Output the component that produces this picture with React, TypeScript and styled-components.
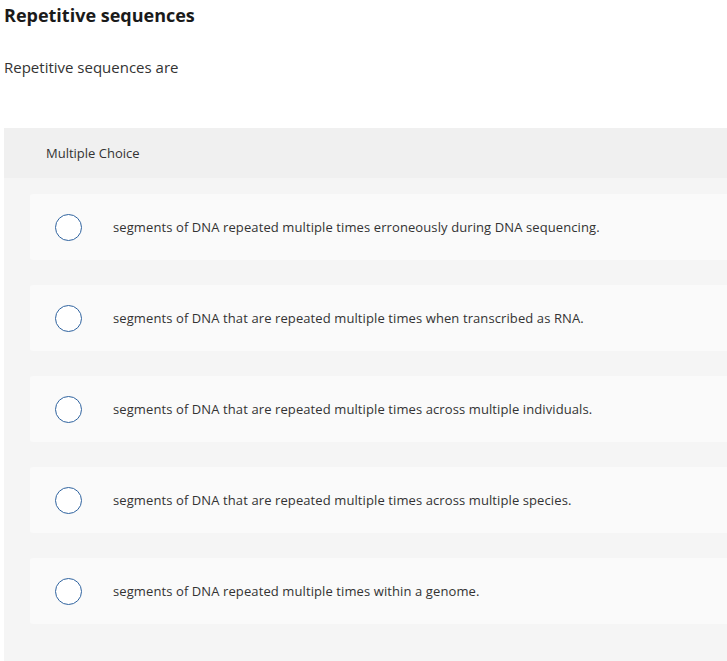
import React from "react";
import styled, { createGlobalStyle } from "styled-components";

const Global = createGlobalStyle`
  html, body { margin: 0; padding: 0; background: #ffffff; }
  body { font-family: "Open Sans", "Liberation Sans", Arial, sans-serif; color: #333; }
  * { box-sizing: border-box; }
`;

const Page = styled.div`
  width: 727px;
  height: 661px;
  overflow: hidden;
  padding-left: 4px;
`;

const Title = styled.h1`
  margin: 0;
  padding-top: 4px;
  font-size: 18px;
  line-height: 22px;
  font-weight: 700;
  color: #1a1a1a;
`;

const Prompt = styled.p`
  margin: 31px 0 0;
  font-size: 15px;
  line-height: 20px;
  color: #333;
`;

const Panel = styled.section`
  margin-top: 51px;
  width: 740px;
  background: #f5f5f5;
  padding-bottom: 37px;
`;

const Header = styled.div`
  height: 50px;
  background: #f0f0f0;
  display: flex;
  align-items: center;
  padding-left: 42px;
  font-size: 13px;
  color: #333;
`;

const Options = styled.div`
  display: flex;
  flex-direction: column;
  gap: 25px;
  padding: 16px 0 0 26px;
`;

const Option = styled.label`
  height: 66px;
  background: #fafafa;
  border-radius: 3px;
  display: flex;
  align-items: center;
  padding-left: 25px;
  cursor: pointer;
`;

const Radio = styled.span`
  width: 27px;
  height: 27px;
  border-radius: 50%;
  border: 1px solid #2f639f;
  background: #fff;
  flex: none;
`;

const OptionText = styled.span`
  margin-left: 31px;
  font-size: 13px;
  letter-spacing: 0.1px;
  color: #333;
`;

const choices = [
  "segments of DNA repeated multiple times erroneously during DNA sequencing.",
  "segments of DNA that are repeated multiple times when transcribed as RNA.",
  "segments of DNA that are repeated multiple times across multiple individuals.",
  "segments of DNA that are repeated multiple times across multiple species.",
  "segments of DNA repeated multiple times within a genome.",
];

export default function App() {
  return (
    <>
      <Global />
      <Page>
        <Title>Repetitive sequences</Title>
        <Prompt>Repetitive sequences are</Prompt>
        <Panel>
          <Header>Multiple Choice</Header>
          <Options>
            {choices.map((c) => (
              <Option key={c}>
                <Radio />
                <OptionText>{c}</OptionText>
              </Option>
            ))}
          </Options>
        </Panel>
      </Page>
    </>
  );
}
